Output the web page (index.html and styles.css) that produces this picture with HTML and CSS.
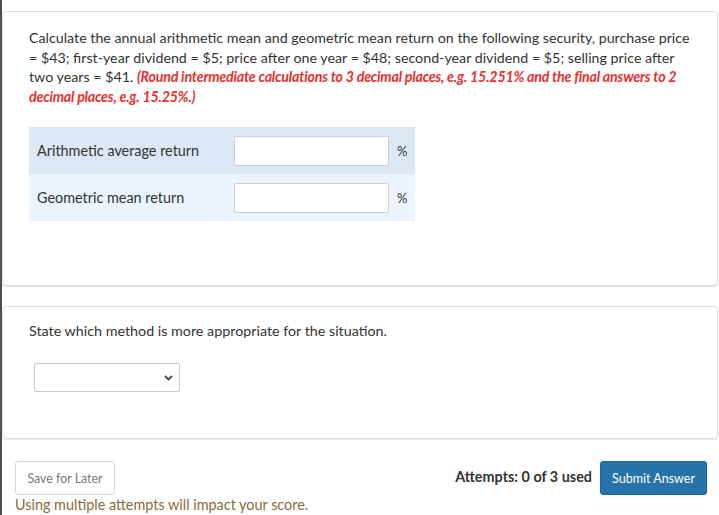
FILE: index.html
```html
<!DOCTYPE html>
<html>
<head>
<meta charset="utf-8">
<link rel="stylesheet" href="styles.css">
</head>
<body>
<div class="page">
  <div class="card card-one">
    <p class="question">Calculate the annual arithmetic mean and geometric mean return on the following security, purchase price = $43; first-year dividend = $5; price after one year = $48; second-year dividend = $5; selling price after two years = $41. <em class="hint">(Round intermediate calculations to 3 decimal places, e.g. 15.251% and the final answers to 2 decimal places, e.g. 15.25%.)</em></p>
    <div class="answers">
      <div class="row row-dark">
        <span class="label">Arithmetic average return</span>
        <span class="field"></span>
        <span class="unit">%</span>
      </div>
      <div class="row row-light">
        <span class="label">Geometric mean return</span>
        <span class="field"></span>
        <span class="unit">%</span>
      </div>
    </div>
  </div>
  <div class="card card-two">
    <p class="question-two">State which method is more appropriate for the situation.</p>
    <div class="select">
      <svg class="chev" width="9" height="6" viewBox="0 0 9 6"><path d="M1 1 L4.5 4.5 L8 1" fill="none" stroke="#444" stroke-width="1.8"/></svg>
    </div>
  </div>
  <div class="footer">
    <div class="footer-left">
      <button class="btn-save">Save for Later</button>
      <div class="warn">Using multiple attempts will impact your score.</div>
    </div>
    <div class="footer-right">
      <span class="attempts">Attempts: 0 of 3 used</span>
      <button class="btn-submit">Submit Answer</button>
    </div>
  </div>
</div>
</body>
</html>
```

FILE: styles.css
```css
html, body {
  margin: 0;
  padding: 0;
  background: #fff;
}
body {
  font-family: Lato, "Open Sans", sans-serif;
  color: #333;
}
.page {
  border-left: 2px solid #4b4b4b;
  min-height: 515px;
  box-sizing: border-box;
  padding-top: 11px;
}
.card {
  border: 1px solid #dcdcdc;
  border-radius: 4px;
  margin-right: 1px;
  box-shadow: 0 1px 1px #e6e6e6;
}
.card-one {
  padding: 16px 20px 64px 26px;
}
.question {
  margin: 0;
  width: 668px;
  font-size: 14.25px;
  line-height: 19.5px;
  color: #333;
}
.hint {
  color: #e8302c;
  font-weight: bold;
  font-style: italic;
  letter-spacing: -0.21px;
}
.answers {
  margin-top: 21px;
  width: 386px;
}
.row {
  display: flex;
  align-items: center;
  height: 47px;
}
.row-dark { background: #dde8f6; }
.row-light { background: #ebf3fd; }
.label {
  width: 197px;
  padding-left: 8px;
  font-size: 14.4px;
  color: #333;
}
.field {
  width: 153px;
  height: 28px;
  background: #fff;
  border: 1px solid #cfcfcf;
  border-radius: 2px;
}
.unit {
  margin-left: 8px;
  font-size: 13px;
  color: #333;
}
.card-two {
  margin-top: 20px;
  padding: 14px 26px 46px 26px;
}
.question-two {
  margin: 0;
  font-size: 14.3px;
  line-height: 19px;
}
.select {
  margin-top: 23px;
  margin-left: 5px;
  height: 27px;
  border: 1px solid #c8c8c8;
  border-radius: 2px;
  display: flex;
  align-items: center;
  justify-content: flex-end;
  padding-right: 6px;
  width: 138px;
}
.chev { display: block; }
.footer {
  display: flex;
  justify-content: space-between;
  padding: 22px 12px 0 13px;
}
.btn-save {
  display: block;
  font-family: Lato, sans-serif;
  font-size: 12.4px;
  color: #777;
  background: #fff;
  border: 1px solid #d6d6d6;
  border-radius: 3px;
  width: 100px;
  height: 34px;
  padding: 0;
}
.warn {
  margin-top: 1px;
  font-size: 14.4px;
  color: #8a6a3a;
}
.footer-right {
  display: flex;
  align-items: flex-start;
}
.attempts {
  margin-top: 7px;
  font-size: 14.4px;
  font-weight: bold;
  color: #333;
  margin-right: 8px;
}
.btn-submit {
  font-family: Lato, sans-serif;
  font-size: 12.5px;
  color: #fff;
  background: #2673a8;
  border: 1px solid #1f6496;
  border-radius: 3px;
  width: 107px;
  height: 34px;
  padding: 0;
}
```
